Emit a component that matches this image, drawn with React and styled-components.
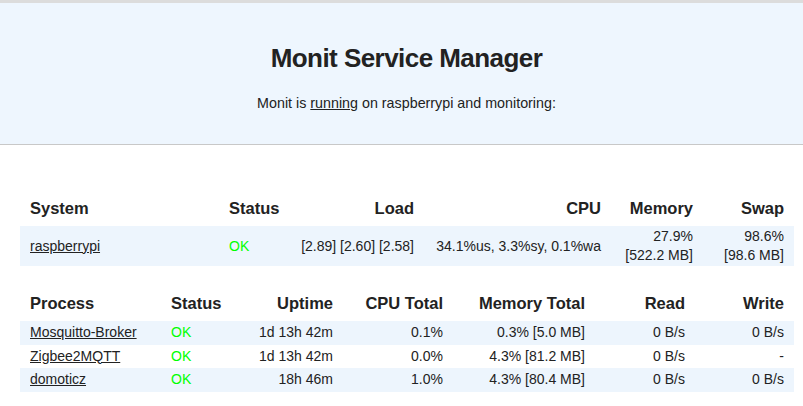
import React from "react";
import styled, { createGlobalStyle } from "styled-components";

const Global = createGlobalStyle`
  html, body { margin: 0; padding: 0; background: #fff; }
  body {
    font-family: "Liberation Sans", Arial, sans-serif;
    font-size: 14px;
    color: #222;
    border-top: 3px solid #dcdcdc;
  }
`;

const Header = styled.header`
  background: #eef6fe;
  border-bottom: 1px solid #c8c8c8;
  height: 142px;
  display: flex;
  flex-direction: column;
  align-items: center;
  box-sizing: border-box;
  padding: 40px 0 0 10px;
`;

const Title = styled.h1`
  margin: 0;
  font-size: 26px;
  line-height: 30px;
  font-weight: bold;
  color: #222;
  letter-spacing: -0.55px;
`;

const Subtitle = styled.p`
  margin: 21px 0 0;
  font-size: 14.3px;
  line-height: 18px;
  color: #222;
`;

const Link = styled.a`
  color: #222;
  text-decoration: underline;
`;

const Content = styled.main`
  padding: 50px 9px 0 20px;
  display: flex;
  flex-direction: column;
  gap: 24px;
`;

const Table = styled.table`
  width: 774px;
  border-collapse: collapse;
  table-layout: fixed;
`;

const Th = styled.th`
  font-size: 16.5px;
  font-weight: bold;
  line-height: 18px;
  padding: 4px 10px 9px;
  text-align: ${(p) => (p.$right ? "right" : "left")};
  color: #222;
  white-space: nowrap;
`;

const Row = styled.tr`
  background: ${(p) => (p.$shade ? "#edf5fd" : "#fff")};
`;

const Td = styled.td`
  padding: ${(p) => (p.$tall ? "1px 10px" : "3px 10px")};
  line-height: ${(p) => (p.$tall ? "19px" : "17.6px")};
  text-align: ${(p) => (p.$right ? "right" : "left")};
  vertical-align: middle;
  white-space: nowrap;
  color: #222;
`;

const Ok = styled.span`
  color: #00ff00;
`;

const sysCols = [199, 70, 135, 187, 92, 91];
const procCols = [141, 70, 112, 110, 142, 100, 99];

const processes = [
  ["Mosquitto-Broker", "1d 13h 42m", "0.1%", "0.3% [5.0 MB]", "0 B/s", "0 B/s"],
  ["Zigbee2MQTT", "1d 13h 42m", "0.0%", "4.3% [81.2 MB]", "0 B/s", "-"],
  ["domoticz", "18h 46m", "1.0%", "4.3% [80.4 MB]", "0 B/s", "0 B/s"],
];

export default function App() {
  return (
    <>
      <Global />
      <Header>
        <Title>Monit Service Manager</Title>
        <Subtitle>
          Monit is <Link href="#">running</Link> on raspberrypi and monitoring:
        </Subtitle>
      </Header>
      <Content>
        <Table>
          <colgroup>
            {sysCols.map((w, i) => (
              <col key={i} style={{ width: w }} />
            ))}
          </colgroup>
          <thead>
            <tr>
              <Th>System</Th>
              <Th>Status</Th>
              <Th $right>Load</Th>
              <Th $right>CPU</Th>
              <Th $right>Memory</Th>
              <Th $right>Swap</Th>
            </tr>
          </thead>
          <tbody>
            <Row $shade>
              <Td $tall>
                <Link href="#">raspberrypi</Link>
              </Td>
              <Td $tall>
                <Ok>OK</Ok>
              </Td>
              <Td $tall $right>[2.89] [2.60] [2.58]</Td>
              <Td $tall $right>34.1%us, 3.3%sy, 0.1%wa</Td>
              <Td $tall $right>
                27.9%
                <br />
                [522.2 MB]
              </Td>
              <Td $tall $right>
                98.6%
                <br />
                [98.6 MB]
              </Td>
            </Row>
          </tbody>
        </Table>

        <Table>
          <colgroup>
            {procCols.map((w, i) => (
              <col key={i} style={{ width: w }} />
            ))}
          </colgroup>
          <thead>
            <tr>
              <Th>Process</Th>
              <Th>Status</Th>
              <Th $right>Uptime</Th>
              <Th $right>CPU Total</Th>
              <Th $right>Memory Total</Th>
              <Th $right>Read</Th>
              <Th $right>Write</Th>
            </tr>
          </thead>
          <tbody>
            {processes.map((p, i) => (
              <Row key={p[0]} $shade={i % 2 === 0}>
                <Td>
                  <Link href="#">{p[0]}</Link>
                </Td>
                <Td>
                  <Ok>OK</Ok>
                </Td>
                <Td $right>{p[1]}</Td>
                <Td $right>{p[2]}</Td>
                <Td $right>{p[3]}</Td>
                <Td $right>{p[4]}</Td>
                <Td $right>{p[5]}</Td>
              </Row>
            ))}
          </tbody>
        </Table>
      </Content>
    </>
  );
}
